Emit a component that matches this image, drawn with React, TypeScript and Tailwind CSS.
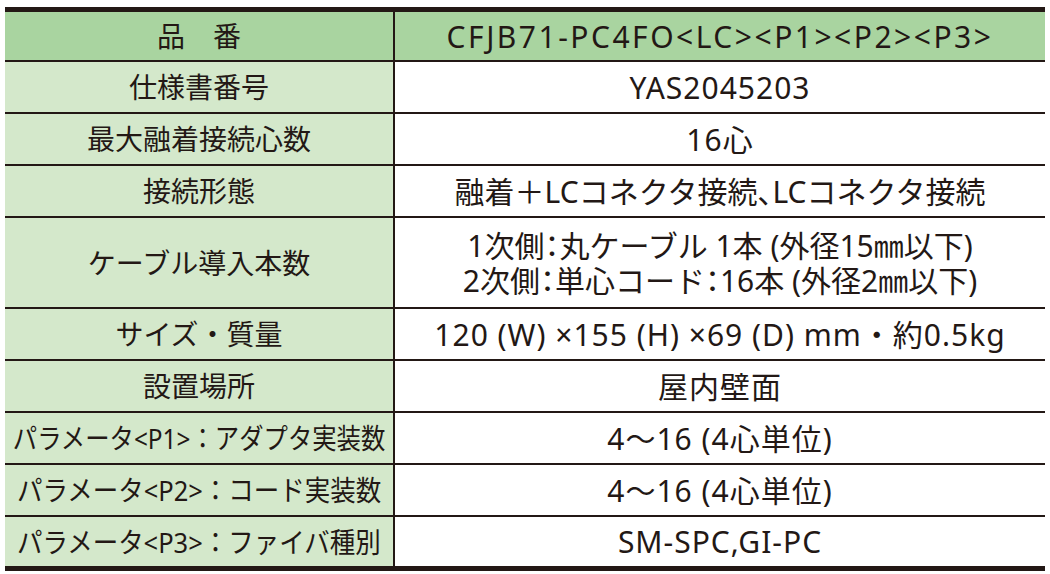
import React from 'react';

type Row = {
  label: string;
  value: React.ReactNode;
  h: string;
  squeeze?: string;
  valueCls?: string;
  last?: boolean;
};

// proportional punctuation (colon / comma) like the print original
const P = ({ c }: { c: string }) => (
  <span className="inline-block leading-[35px] [font-feature-settings:'palt']">{c}</span>
);

const ROWS: Row[] = [
  { label: '仕様書番号', value: 'YAS2045203', h: 'h-[52px]' },
  { label: '最大融着接続心数', value: '16心', h: 'h-[52px]' },
  {
    label: '接続形態',
    value: (
      <span>
        融着＋LCコネクタ接続<P c="、" />LCコネクタ接続
      </span>
    ),
    h: 'h-[52px]',
    valueCls: 'tracking-[0px]',
  },
  {
    label: 'ケーブル導入本数',
    value: (
      <div className="flex flex-col items-center leading-[35px]">
        <span>
          1次側<P c="：" />丸ケーブル 1本 (外径15㎜以下)
        </span>
        <span>
          2次側<P c="：" />単心コード<P c="：" />16本 (外径2㎜以下)
        </span>
      </div>
    ),
    h: 'h-[91px]',
    valueCls: 'tracking-[0px]',
  },
  { label: 'サイズ・質量', value: '120 (W) ×155 (H) ×69 (D) mm・約0.5kg', h: 'h-[52px]' },
  { label: '設置場所', value: '屋内壁面', h: 'h-[52px]' },
  { label: 'パラメータ<P1>：アダプタ実装数', value: '4～16 (4心単位)', h: 'h-[52px]', squeeze: 'scale-x-[0.87]' },
  { label: 'パラメータ<P2>：コード実装数', value: '4～16 (4心単位)', h: 'h-[52px]', squeeze: 'scale-x-[0.91]' },
  { label: 'パラメータ<P3>：ファイバ種別', value: 'SM-SPC,GI-PC', h: 'h-[49px]', squeeze: 'scale-x-[0.91]', last: true },
];

export default function App() {
  return (
    <div className="h-[574px] w-[1050px] bg-white px-[5px] pt-[7px] text-[28px] text-[#231815] [font-family:'Noto_Sans','Noto_Sans_CJK_JP',sans-serif]">
      <div className="flex flex-col border-y-[5px] border-[#231815]">
        <div className="flex h-[50px] border-b-2 border-[#231815] bg-[#a9d4a0]">
          <div className="flex w-[390px] items-center justify-center border-r-2 border-[#231815]">品　番</div>
          <div className="flex flex-1 items-center justify-center text-[30px] tracking-[2.5px]">
            CFJB71-PC4FO&lt;LC&gt;&lt;P1&gt;&lt;P2&gt;&lt;P3&gt;
          </div>
        </div>
        {ROWS.map((r) => (
          <div key={r.label} className={`flex ${r.h} ${r.last ? '' : 'border-b-2'} border-[#231815]`}>
            <div className="flex w-[390px] items-center justify-center border-r-2 border-[#231815] bg-[#d4e8cb]">
              <span className={r.squeeze ? `inline-block whitespace-nowrap ${r.squeeze}` : 'whitespace-nowrap'}>
                {r.label}
              </span>
            </div>
            <div
              className={`flex flex-1 items-center justify-center whitespace-nowrap bg-white text-[30px] ${r.valueCls ?? 'tracking-[1px]'}`}
            >
              {r.value}
            </div>
          </div>
        ))}
      </div>
    </div>
  );
}
